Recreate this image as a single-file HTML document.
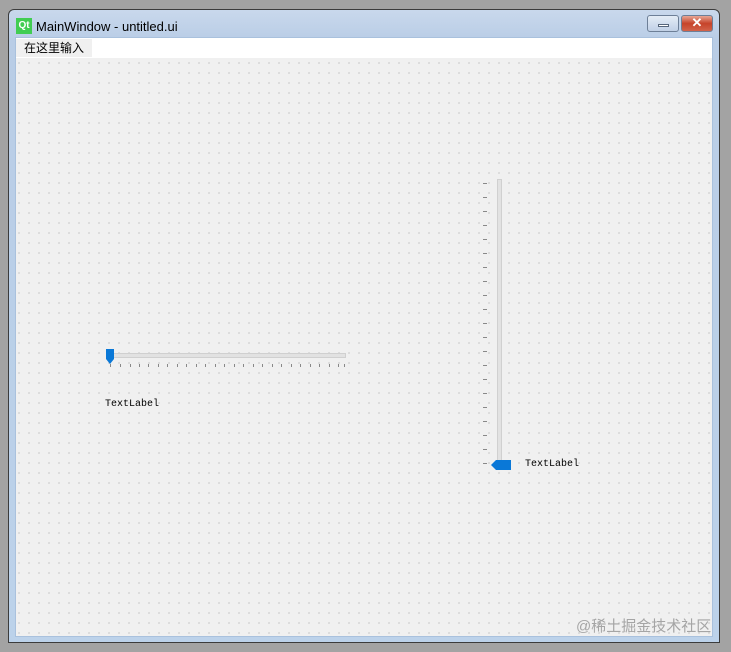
<!DOCTYPE html>
<html><head><meta charset="utf-8"><style>
*{margin:0;padding:0;box-sizing:border-box}
body{width:731px;height:652px;background:#a3a3a3;position:relative;overflow:hidden;font-family:"Liberation Sans","Noto Sans CJK SC",sans-serif}
.win{position:absolute;left:8px;top:9px;width:712px;height:634px;border:1px solid #3c3c3c;border-radius:6px 6px 0 0;background:linear-gradient(#c9d8ec,#b9cde6 30px,#bcd2ea);}
.title{position:absolute;top:19px;font-size:13px;color:#000}
.qt{position:absolute;left:16px;top:18px;width:16px;height:16px;background:#41cd52;color:#fff;font-size:10px;font-weight:bold;line-height:16px;text-align:center}
.btn{position:absolute;top:15px;height:17px;border:1px solid #6d7f97;border-radius:3px}
.min{left:647px;width:32px;background:linear-gradient(#e4ecf6,#c0d0e6)}
.cls{left:681px;width:32px;background:linear-gradient(#e8a694,#c6432a 50%,#d2634a)}
.client{position:absolute;left:15px;top:37px;width:698px;height:600px;background:#f0f0f0;border:1px solid #a9c1dd}
.menu{position:absolute;left:0;top:0;width:696px;height:20px;background:#fff}
.menu span{position:absolute;left:0;top:1px;height:18px;width:76px;background:#f0f0f0;font-size:12px;line-height:18px;padding-left:8px}
.form{position:absolute;left:0;top:20px;width:696px;height:578px;background-color:#f0f0f0;background-image:radial-gradient(circle,#a8a8a8 0.5px,transparent 0.8px);background-size:10px 10px;background-position:-2px 0px}
.lbl{position:absolute;font-family:"Liberation Mono","Noto Sans CJK SC",monospace;font-size:10px;color:#000}
.wm{position:absolute;left:576px;top:615px;font-size:15px;color:#a5a5a5;font-family:"Liberation Sans","Noto Sans CJK SC",sans-serif}
</style></head><body>
<div class="win"></div>
<div class="qt">Qt</div>
<div class="title" style="left:36px">MainWindow - untitled.ui</div>
<div class="btn min"><div style="position:absolute;left:10px;top:8px;width:11px;height:3px;background:#fff;border:1px solid #55657a"></div></div>
<div class="btn cls"><div style="position:absolute;left:0;width:30px;top:-1px;text-align:center;color:#fff;font-weight:bold;font-size:13px">✕</div></div>
<div class="client">
 <div class="menu"><span>在这里输入</span></div>
 <div class="form"></div>
</div>
<div style="position:absolute;left:110px;top:353px;width:236px;height:5px;background:#e2e2e2;border:1px solid #d0d0d0"></div>
<svg style="position:absolute;left:100px;top:346px" width="250" height="24">
<path d="M6 3h8v10l-4 5l-4-5z" fill="#0a78d7"/>
<g stroke="#888" stroke-width="1">
<path d="M10.5 18v3M20.5 18v3M30.5 18v3M39.5 18v3M48.5 18v3M58.5 18v3M67.5 18v3M77.5 18v3M86.5 18v3M96.5 18v3M105.5 18v3M115.5 18v3M124.5 18v3M134.5 18v3M143.5 18v3M153.5 18v3M162.5 18v3M172.5 18v3M181.5 18v3M191.5 18v3M200.5 18v3M210.5 18v3M219.5 18v3M229.5 18v3M238.5 18v3M244.5 18v3"/>
</g></svg>
<div class="lbl" style="left:105px;top:399px">TextLabel</div>
<div style="position:absolute;left:497px;top:179px;width:5px;height:286px;background:#e2e2e2;border:1px solid #d0d0d0"></div>
<svg style="position:absolute;left:478px;top:178px" width="40" height="295">
<g stroke="#888">
<path d="M5 5.5h4M5 19.5h4M5 33.5h4M5 47.5h4M5 61.5h4M5 75.5h4M5 89.5h4M5 103.5h4M5 117.5h4M5 131.5h4M5 145.5h4M5 159.5h4M5 173.5h4M5 187.5h4M5 201.5h4M5 215.5h4M5 229.5h4M5 243.5h4M5 257.5h4M5 271.5h4M5 285.5h4"/>
</g>
<path d="M18 292h15v-10h-15l-5 5z" fill="#0a78d7"/>
</svg>
<div class="lbl" style="left:525px;top:459px">TextLabel</div>
<div class="wm">@稀土掘金技术社区</div>
</body></html>
